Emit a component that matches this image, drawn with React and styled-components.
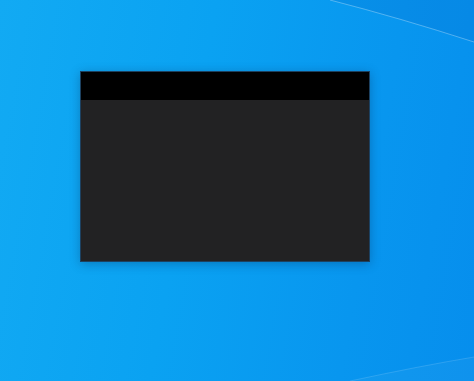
import React from "react";
import styled, { createGlobalStyle } from "styled-components";

const GlobalStyle = createGlobalStyle`
  html, body, #root {
    margin: 0;
    padding: 0;
    width: 100%;
    height: 100%;
  }
  body {
    font-family: "Segoe UI", "Noto Sans", sans-serif;
    overflow: hidden;
  }
`;

const Desktop = styled.div`
  position: relative;
  width: 100vw;
  height: 100vh;
  overflow: hidden;
  background: linear-gradient(100deg, #12aaf3 0%, #0aa2f2 40%, #0896ef 75%, #068eed 100%);
`;

// the wallpaper's light beams
const Streaks = styled.svg`
  position: absolute;
  inset: 0;
  width: 100%;
  height: 100%;
  pointer-events: none;
`;

const Window = styled.div`
  position: absolute;
  left: 80px;
  top: 71px;
  width: 290px;
  height: 191px;
  display: flex;
  flex-direction: column;
  background: #222223;
  border: 1px solid #1d4160;
  box-sizing: border-box;
  box-shadow: 0 2px 10px rgba(0, 30, 70, 0.3);
`;

const TitleBar = styled.div`
  height: 28px;
  flex-shrink: 0;
  background: #000;
`;

const Body = styled.div`
  flex: 1;
  background: #222223;
`;

const App = () => {
  return (
    <>
      <GlobalStyle />
      <Desktop>
        <Streaks viewBox="0 0 474 381" preserveAspectRatio="none">
          <path d="M330 0 Q400 18 474 42 L474 0 Z" fill="rgba(0,60,170,0.1)" />
          <path
            d="M330 0 Q400 18 474 42"
            stroke="rgba(255,255,255,0.3)"
            strokeWidth="1"
            fill="none"
          />
          <path
            d="M350 381 Q420 366 474 357 L474 381 Z"
            fill="rgba(255,255,255,0.04)"
          />
          <path
            d="M350 381 Q420 366 474 357"
            stroke="rgba(255,255,255,0.14)"
            strokeWidth="1"
            fill="none"
          />
        </Streaks>
        <Window>
          <TitleBar />
          <Body />
        </Window>
      </Desktop>
    </>
  );
};

export default App;
